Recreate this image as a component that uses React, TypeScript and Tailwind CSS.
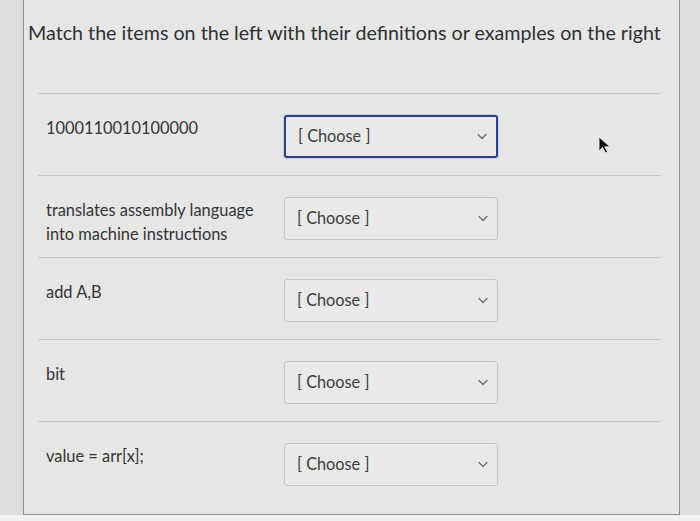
import React from 'react';

type Item = {
  id: number;
  label: string[];
  focused?: boolean;
};

const items: Item[] = [
  { id: 1, label: ['1000110010100000'], focused: true },
  { id: 2, label: ['translates assembly language', 'into machine instructions'] },
  { id: 3, label: ['add A,B'] },
  { id: 4, label: ['bit'] },
  { id: 5, label: ['value = arr[x];'] },
];

function Chevron() {
  return (
    <svg width="10" height="7" viewBox="0 0 10 7" fill="none" className="shrink-0">
      <path d="M1 1.5 L5 5.5 L9 1.5" stroke="#6b6f78" strokeWidth="1.4" strokeLinecap="round" strokeLinejoin="round" />
    </svg>
  );
}

function ChooseSelect({ focused }: { focused?: boolean }) {
  return (
    <div
      className={`flex items-center justify-between w-[214px] h-[43px] pl-[12px] pr-[9px] rounded-[3px] bg-[#e9eae8] ${
        focused ? 'border-2 border-[#2c3f91] shadow-[0_0_0_1px_#c9cde0]' : 'border border-[#c6c7c5]'
      }`}
    >
      <span className="text-[16.3px] text-[#3c3d3f]">[ Choose ]</span>
      <Chevron />
    </div>
  );
}

function MatchRow({ item }: { item: Item }) {
  return (
    <div className="flex h-[82px] border-t border-[#c9cac8]">
      <div className="w-[246px] pl-[8px] pt-[22px] text-[16.4px] leading-[24px] text-[#333436]">
        {item.label.map((line) => (
          <div key={line}>{line}</div>
        ))}
      </div>
      <div className="pt-[21px]">
        <ChooseSelect focused={item.focused} />
      </div>
    </div>
  );
}

export default function App() {
  return (
    <div className="relative w-[700px] h-[521px] overflow-hidden bg-[#f1f2f0] font-['Lato','Liberation_Sans',sans-serif]">
      <div className="flex h-[515px] bg-[#dddedc]">
        <div className="ml-[23px] mr-[20px] flex-1 h-full bg-[#e6e7e5] border-l border-r border-b border-[#8f908e]">
          <div className="pl-[4px] pt-[19px] text-[19.7px] leading-[28px] text-[#2f3032]">
            Match the items on the left with their definitions or examples on the right
          </div>
          <div className="mt-[46px] ml-[14px] mr-[18px]">
            {items.map((item) => (
              <MatchRow key={item.id} item={item} />
            ))}
          </div>
        </div>
      </div>

      {/* mouse cursor */}
      <svg className="absolute left-[598px] top-[136px]" width="14" height="18" viewBox="0 0 14 18">
        <path d="M1 1 L1 15 L4.5 11.5 L7.5 17 L9.5 16 L6.8 10.8 L12 10.8 Z" fill="#111" stroke="#f5f5f5" strokeWidth="0.8" />
      </svg>
    </div>
  );
}
